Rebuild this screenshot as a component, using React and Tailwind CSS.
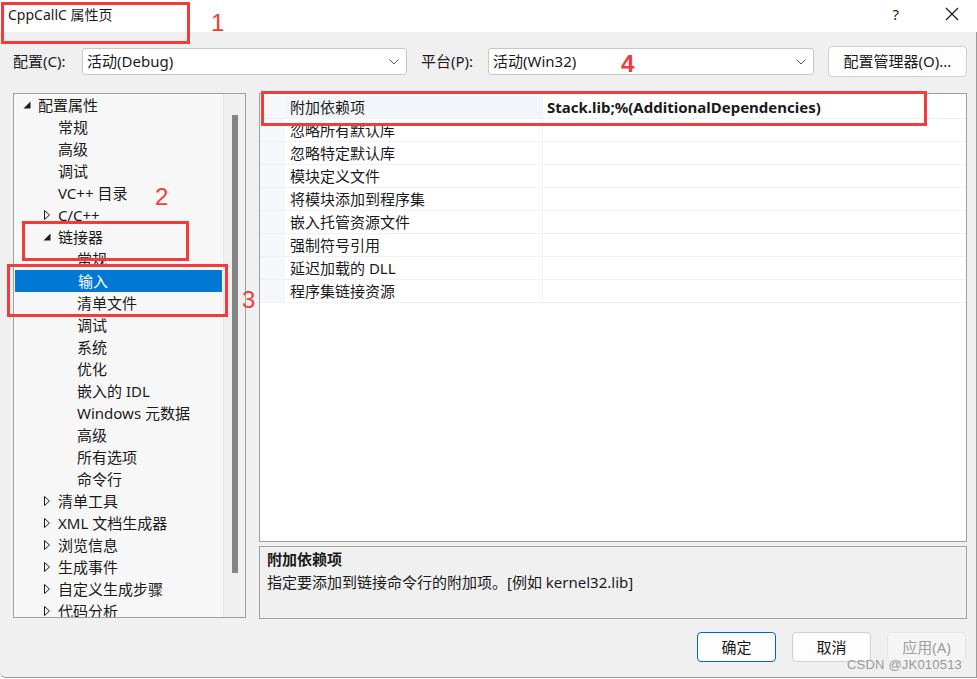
import React from 'react'

const FONT = { fontFamily: '"Segoe UI", "Noto Sans", "Noto Sans CJK SC", sans-serif' }

// tree rows: [indent level, label, expander, selected]
const TREE = [
  [0, '配置属性', 'open'],
  [1, '常规'],
  [1, '高级'],
  [1, '调试'],
  [1, 'VC++ 目录'],
  [1, 'C/C++', 'closed'],
  [1, '链接器', 'open'],
  [2, '常规'],
  [2, '输入', null, true],
  [2, '清单文件'],
  [2, '调试'],
  [2, '系统'],
  [2, '优化'],
  [2, '嵌入的 IDL'],
  [2, 'Windows 元数据'],
  [2, '高级'],
  [2, '所有选项'],
  [2, '命令行'],
  [1, '清单工具', 'closed'],
  [1, 'XML 文档生成器', 'closed'],
  [1, '浏览信息', 'closed'],
  [1, '生成事件', 'closed'],
  [1, '自定义生成步骤', 'closed'],
  [1, '代码分析', 'closed'],
]

const PROPS = [
  ['附加依赖项', 'Stack.lib;%(AdditionalDependencies)'],
  ['忽略所有默认库', ''],
  ['忽略特定默认库', ''],
  ['模块定义文件', ''],
  ['将模块添加到程序集', ''],
  ['嵌入托管资源文件', ''],
  ['强制符号引用', ''],
  ['延迟加载的 DLL', ''],
  ['程序集链接资源', ''],
]

function Expander({ kind }) {
  if (kind === 'open') {
    return (
      <svg width="8" height="8" viewBox="0 0 8 8" className="shrink-0">
        <path d="M7.5 0.5 L7.5 7.5 L0.5 7.5 Z" fill="#1a1a1a" />
      </svg>
    )
  }
  return (
    <svg width="8" height="12" viewBox="0 0 8 12" className="shrink-0">
      <path d="M1.5 1.5 L6.5 6 L1.5 10.5 Z" fill="none" stroke="#1a1a1a" strokeWidth="1" />
    </svg>
  )
}

function Chevron() {
  return (
    <svg width="12" height="8" viewBox="0 0 12 8">
      <path d="M1.5 1.5 L6 6 L10.5 1.5" fill="none" stroke="#555" strokeWidth="1" />
    </svg>
  )
}

function Select({ value, w }) {
  return (
    <div className={`${w} h-[27px] bg-white border border-[#c8c8c8] rounded-[3px] flex items-center justify-between pl-[4px] pr-[6px]`}>
      <span>{value}</span>
      <Chevron />
    </div>
  )
}

function TreeRow({ level, label, exp, selected }) {
  const pad = level === 0 ? 'pl-[9px]' : level === 1 ? (exp ? 'pl-[29px]' : 'pl-[44px]') : 'pl-[63px]'
  return (
    <div
      className={`h-[22px] flex items-center gap-[7px] ${pad} ${
        selected ? 'bg-[#0078d4] text-white mx-[1px]' : ''
      }`}
    >
      {exp && <Expander kind={exp} />}
      <span className="leading-none">{label}</span>
    </div>
  )
}

function RedBox({ className }) {
  return <div className={`absolute border-[3px] border-[#f23b3b] pointer-events-none ${className}`} />
}

function RedNum({ n, className }) {
  return (
    <span
      className={`absolute text-[#f23b3b] text-[24px] leading-none ${className}`}
      style={{ fontFamily: '"Liberation Sans", sans-serif' }}
    >
      {n}
    </span>
  )
}

export default function App() {
  return (
    <div className="w-[977px] h-[679px] relative overflow-hidden bg-white text-[15px] text-[#1a1a1a]" style={FONT}>
      {/* title bar */}
      <div className="h-[32px] bg-white flex items-center pl-[8px] pr-[18px]">
        <span className="flex-1 text-[14px] -mt-[4px]">CppCallC 属性页</span>
        <span className="text-[15px] mr-[46px] -mt-[4px]">?</span>
        <svg width="14" height="14" viewBox="0 0 14 14" className="-mt-[4px]">
          <path d="M1 1 L13 13 M13 1 L1 13" stroke="#1a1a1a" strokeWidth="1.2" />
        </svg>
      </div>

      {/* dialog body */}
      <div className="h-[646px] bg-[#f0f0f0] border-b border-r border-[#9a9a9a] rounded-bl-[6px] flex flex-col">
        {/* config row */}
        <div className="flex items-center pl-[13px] pt-[14px]">
          <span className="w-[69px]">配置(C):</span>
          <Select value="活动(Debug)" w="w-[325px]" />
          <span className="w-[67px] ml-[14px]">平台(P):</span>
          <Select value="活动(Win32)" w="w-[326px]" />
          <div className="ml-[14px] w-[139px] h-[31px] bg-[#fdfdfd] border border-[#d0d0d0] rounded-[4px] flex items-center justify-center">
            配置管理器(O)...
          </div>
        </div>

        {/* main panes */}
        <div className="flex gap-[13px] pl-[13px] mt-[16px]">
          {/* tree */}
          <div className="w-[233px] h-[525px] border border-[#a0a0a0] bg-[#f7f7f7] flex overflow-hidden">
            <div className="w-[209px]">
              {TREE.map(([lv, label, exp, sel], i) => (
                <TreeRow key={i} level={lv} label={label} exp={exp} selected={sel} />
              ))}
            </div>
            <div className="flex-1 bg-[#f0f0f0] border-l border-[#e6e6e6] flex justify-center pt-[21px]">
              <div className="w-[6px] h-[458px] bg-[#858585]" />
            </div>
          </div>

          {/* right column */}
          <div className="w-[708px] flex flex-col gap-[4px]">
            <div className="h-[449px] bg-white border border-[#a0a0a0] pt-[2px]">
              {PROPS.map(([name, value], i) => (
                <div key={i} className="h-[23px] flex border-b border-[#f0f2f7]">
                  <div className="w-[25px] bg-[#f5f7fa]" />
                  <div
                    className={`w-[258px] pl-[5px] flex items-center border-r border-[#f0f2f7] ${
                      i === 0 ? 'bg-[#f2f5fa]' : ''
                    }`}
                  >
                    {name}
                  </div>
                  <div className="flex-1 pl-[4px] flex items-center font-bold">{value}</div>
                </div>
              ))}
            </div>
            <div className="h-[73px] border border-[#a0a0a0] bg-[#f0f0f0] px-[7px] pt-[1px]">
              <div className="font-bold leading-[22px]">附加依赖项</div>
              <div className="leading-[24px]">指定要添加到链接命令行的附加项。[例如 kernel32.lib]</div>
            </div>
          </div>
        </div>

        {/* buttons */}
        <div className="flex justify-end gap-[16px] pr-[10px] mt-[13px]">
          <div className="w-[79px] h-[30px] bg-[#fdfdfd] border border-[#0067c0] rounded-[4px] flex items-center justify-center">
            确定
          </div>
          <div className="w-[79px] h-[30px] bg-[#fdfdfd] border border-[#d0d0d0] rounded-[4px] flex items-center justify-center">
            取消
          </div>
          <div className="w-[79px] h-[30px] bg-[#f5f5f5] border border-[#e5e5e5] rounded-[4px] flex items-center justify-center text-[#a0a0a0]">
            应用(A)
          </div>
        </div>
      </div>

      {/* watermark */}
      <span
        className="absolute left-[847px] top-[655px] text-[13px] text-[#9a9a9a] tracking-[0.2px]"
        style={{ fontFamily: '"Liberation Sans", sans-serif' }}
      >
        CSDN @JK010513
      </span>

      {/* annotations */}
      <RedBox className="left-[1px] top-[2px] w-[189px] h-[42px]" />
      <RedNum n="1" className="left-[211px] top-[11px]" />
      <RedBox className="left-[22px] top-[221px] w-[167px] h-[40px]" />
      <RedNum n="2" className="left-[155px] top-[185px]" />
      <RedBox className="left-[7px] top-[264px] w-[221px] h-[53px]" />
      <RedNum n="3" className="left-[242px] top-[288px]" />
      <RedBox className="left-[261px] top-[91px] w-[666px] h-[35px]" />
      <RedNum n="4" className="left-[621px] top-[52px] font-semibold" />
    </div>
  )
}
